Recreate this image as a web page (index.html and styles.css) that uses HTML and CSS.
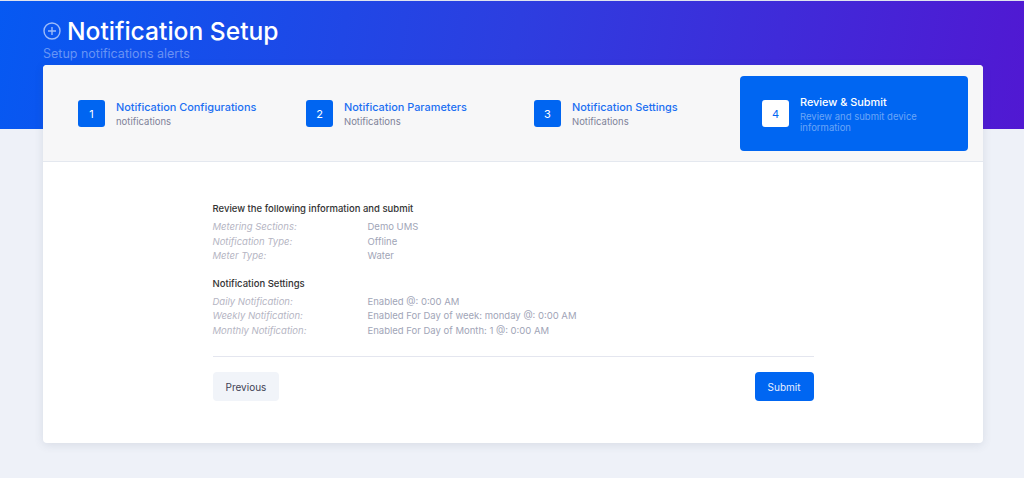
FILE: index.html
```html
<!DOCTYPE html>
<html>
<head>
  <meta charset="UTF-8">
  <meta name="viewport" content="width=device-width, initial-scale=1.0">
  <title>Notification Setup</title>
  <link rel="stylesheet" href="styles.css">
</head>
<body>
<div id="page">
  <div id="hero">
    <h1>
      <svg class="plus" viewBox="0 0 18 18" width="18" height="18">
        <circle cx="9" cy="9" r="8" fill="none" stroke="currentColor" stroke-width="1.4"/>
        <path d="M9 5v8M5 9h8" stroke="currentColor" stroke-width="1.4" fill="none"/>
      </svg>
      Notification Setup
    </h1>
    <p id="subtitle">Setup notifications alerts</p>
  </div>

  <div id="card">
    <div class="steps">
      <div class="step">
        <div class="num">1</div>
        <div>
          <div class="step-title">Notification Configurations</div>
          <div class="step-sub">notifications</div>
        </div>
      </div>
      <div class="step">
        <div class="num">2</div>
        <div>
          <div class="step-title">Notification Parameters</div>
          <div class="step-sub">Notifications</div>
        </div>
      </div>
      <div class="step">
        <div class="num">3</div>
        <div>
          <div class="step-title">Notification Settings</div>
          <div class="step-sub">Notifications</div>
        </div>
      </div>
      <div class="step current">
        <div class="num">4</div>
        <div>
          <div class="step-title">Review &amp; Submit</div>
          <div class="step-sub">Review and submit device information</div>
        </div>
      </div>
    </div>

    <div class="review">
      <h4>Review the following information and submit</h4>
      <div class="row"><span class="label">Metering Sections:</span><span class="value">Demo UMS</span></div>
      <div class="row"><span class="label">Notification Type:</span><span class="value">Offline</span></div>
      <div class="row"><span class="label">Meter Type:</span><span class="value">Water</span></div>

      <h4 class="second">Notification Settings</h4>
      <div class="row"><span class="label">Daily Notification:</span><span class="value">Enabled @: 0:00 AM</span></div>
      <div class="row"><span class="label">Weekly Notification:</span><span class="value">Enabled For Day of week: monday @: 0:00 AM</span></div>
      <div class="row"><span class="label">Monthly Notification:</span><span class="value">Enabled For Day of Month: 1 @: 0:00 AM</span></div>

      <div class="actions">
        <button class="btn-light">Previous</button>
        <button class="btn-primary">Submit</button>
      </div>
    </div>
  </div>
</div>
</body>
</html>
```

FILE: styles.css
```css
body {
  margin: 0;
  font-family: Inter, "Liberation Sans", sans-serif;
  background: #eef1f8;
}
#page {
  border-top: 1px solid #dfe3ee;
  background: linear-gradient(100deg, #0659f2 0%, #2d3ee0 50%, #5118d2 100%) no-repeat 0 0 / 100% 128px;
  padding: 0 41px 35px 43px;
}
#hero {
  height: 64px;
  color: #fff;
}
#hero h1 {
  margin: 0;
  padding-top: 16px;
  font-size: 24.6px;
  font-weight: 500;
  line-height: 28px;
  display: flex;
  align-items: center;
  gap: 6px;
}
.plus {
  color: rgba(255, 255, 255, 0.6);
}
#subtitle {
  margin: 1px 0 0 0;
  font-size: 12.5px;
  color: rgba(255, 255, 255, 0.38);
}
#card {
  background: #fff;
  border-radius: 4px;
  box-shadow: 0 2px 10px rgba(60, 70, 100, 0.12);
  overflow: hidden;
}
.steps {
  display: grid;
  grid-template-columns: repeat(4, 228px);
  padding: 11px 14px 10px 13px;
  background: #f7f7f8;
  border-bottom: 1px solid #e4e8ef;
}
.step {
  height: 75px;
  display: flex;
  align-items: center;
  gap: 11px;
  padding: 0 22px;
  border-radius: 4px;
}
.num {
  flex: none;
  width: 27px;
  height: 27px;
  border-radius: 3px;
  background: #0065f1;
  color: #fff;
  font-size: 11px;
  display: flex;
  align-items: center;
  justify-content: center;
}
.step-title {
  font-size: 10.9px;
  font-weight: 500;
  color: #1c6ff2;
  line-height: 15px;
  white-space: nowrap;
}
.step-sub {
  font-size: 9.5px;
  color: #7e8299;
  line-height: 11px;
  margin-top: 1px;
}
.step.current {
  background: #0066f2;
}
.step.current .num {
  background: #fff;
  color: #0066f2;
}
.step.current .step-title {
  color: #fff;
}
.step.current .step-sub {
  color: rgba(255, 255, 255, 0.42);
  padding-right: 20px;
}
.review {
  width: 601px;
  margin: 0 auto;
  padding: 40px 0 42px 0;
}
.review h4 {
  margin: 0 0 4px 0;
  font-size: 9.5px;
  font-weight: 500;
  color: #333;
  line-height: 14px;
}
.review h4.second {
  margin-top: 13px;
}
.row {
  display: flex;
  font-size: 9.5px;
  line-height: 14.5px;
}
.label {
  width: 155px;
  font-style: italic;
  color: #b5b5c3;
}
.value {
  color: #a1a5b7;
}
.actions {
  display: flex;
  justify-content: space-between;
  margin-top: 18px;
  padding-top: 15px;
  border-top: 1px solid #e4e6ef;
}
button {
  height: 29px;
  border: none;
  border-radius: 4px;
  font-family: inherit;
  font-size: 10px;
  padding: 0 13px;
}
.btn-light {
  background: #f1f4f9;
  color: #3f4254;
}
.btn-primary {
  background: #0066f2;
  color: #e8efff;
}
```
